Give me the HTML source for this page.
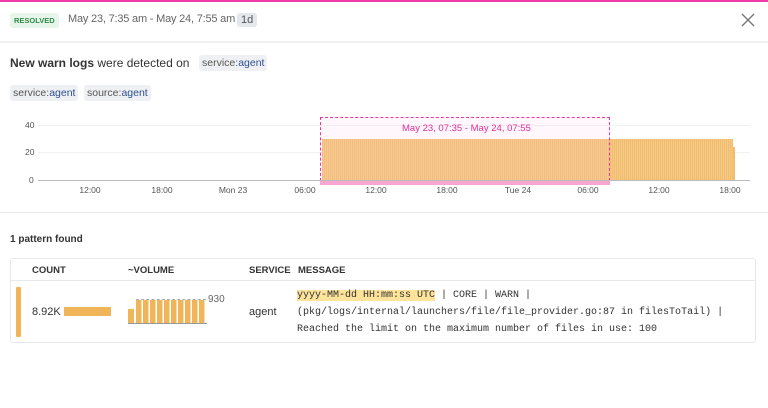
<!DOCTYPE html>
<html><head><style>
*{margin:0;padding:0;box-sizing:border-box}
body{width:768px;height:408px;background:#fff;font-family:"Liberation Sans",sans-serif;position:relative;overflow:hidden;color:#333}
.a{position:absolute;white-space:nowrap}
.tag{background:#eef0f3;border-radius:3px;padding:2px 3px;font-size:10.5px;color:#555}
.tag b{font-weight:normal;color:#2f4f8f}
.yl{font-size:8.5px;color:#555}
.xl{font-size:8.5px;color:#555;transform:translateX(-50%)}
.h{font-size:9.5px;font-weight:bold;color:#333}
.mono{font-family:"Liberation Mono",monospace;font-size:10px;color:#333;line-height:17px}
</style></head><body>
<div class="a" style="left:0;top:0;width:768px;height:2px;background:#f03ca8"></div>
<div class="a" style="left:10px;top:13px;background:#e8f5ea;color:#2e8b47;font-size:7.5px;font-weight:bold;padding:3px 4px;border-radius:3px">RESOLVED</div>
<div class="a" style="left:68px;top:13px;font-size:11px;letter-spacing:-0.2px;color:#666">May 23, 7:35 am - May 24, 7:55 am</div>
<div class="a" style="left:237px;top:13px;background:#e4e7ec;color:#555;font-size:11px;padding:1px 4px;border-radius:3px">1d</div>
<svg class="a" style="left:741px;top:13px" width="14" height="14"><path d="M1 1L13 13M13 1L1 13" stroke="#777" stroke-width="1.4"/></svg>
<div class="a" style="left:0;top:41px;width:768px;height:2px;background:#eef0f3"></div>
<div class="a" style="left:10px;top:56px;font-size:12px;color:#333"><b>New warn logs</b> were detected on</div>
<div class="a tag" style="left:199px;top:55px">service:<b>agent</b></div>
<div class="a tag" style="left:10px;top:85px">service:<b>agent</b></div>
<div class="a tag" style="left:84px;top:85px">source:<b>agent</b></div>
<div class="a yl" style="left:25px;top:120px">40</div>
<div class="a yl" style="left:25px;top:147px">20</div>
<div class="a yl" style="left:29px;top:175px">0</div>
<div class="a" style="left:38px;top:125px;width:712px;height:1px;background:#f0f1f3"></div>
<div class="a" style="left:38px;top:152px;width:712px;height:1px;background:#f0f1f3"></div>
<div class="a" style="left:322px;top:139px;width:411px;height:41px;background:repeating-linear-gradient(90deg,#f2bd6c 0,#f2bd6c 1.4px,#f7d3a0 1.4px,#f7d3a0 2px)"></div>
<div class="a" style="left:733px;top:147px;width:2px;height:33px;background:#f2bd6c"></div>
<div class="a" style="left:320px;top:117px;width:290px;height:64px;border:1px dashed #e8389f;border-bottom:none;background:rgba(255,200,230,0.15)"></div>
<div class="a" style="left:320px;top:181px;width:290px;height:4px;background:#f7a6d2"></div>
<div class="a" style="left:402px;top:123px;font-size:9.5px;color:#e0309a">May 23, 07:35 - May 24, 07:55</div>
<div class="a" style="left:38px;top:180px;width:712px;height:1px;background:#bbb"></div>
<div class="a xl" style="left:90px;top:185px">12:00</div>
<div class="a xl" style="left:162px;top:185px">18:00</div>
<div class="a xl" style="left:233px;top:185px">Mon 23</div>
<div class="a xl" style="left:305px;top:185px">06:00</div>
<div class="a xl" style="left:376px;top:185px">12:00</div>
<div class="a xl" style="left:447px;top:185px">18:00</div>
<div class="a xl" style="left:518px;top:185px">Tue 24</div>
<div class="a xl" style="left:588px;top:185px">06:00</div>
<div class="a xl" style="left:659px;top:185px">12:00</div>
<div class="a xl" style="left:730px;top:185px">18:00</div>
<div class="a" style="left:0;top:212px;width:768px;height:1px;background:#e6e8ec"></div>
<div class="a" style="left:10px;top:234px;font-size:10px;font-weight:bold;color:#333">1 pattern found</div>
<div class="a" style="left:10px;top:258px;width:746px;height:85px;border:1px solid #e6e8ec;border-radius:3px"></div>
<div class="a" style="left:10px;top:280px;width:746px;height:1px;background:#e6e8ec"></div>
<div class="a h" style="left:32px;top:265px">COUNT</div>
<div class="a h" style="left:128px;top:265px">~VOLUME</div>
<div class="a h" style="left:249px;top:265px">SERVICE</div>
<div class="a h" style="left:298px;top:265px">MESSAGE</div>
<div class="a" style="left:16px;top:287px;width:5px;height:50px;background:#f0b459;border-radius:1px"></div>
<div class="a" style="left:32px;top:306px;font-size:11px;color:#333">8.92K</div>
<div class="a" style="left:64px;top:307px;width:47px;height:9px;background:#f0b459"></div>
<div class="a" style="left:136px;top:299px;width:70px;height:1px;border-top:1px dashed #aaa"></div>
<div class="a" style="left:136px;top:300px;width:70px;height:23px;background:repeating-linear-gradient(90deg,#f0b459 0,#f0b459 5.5px,#fff 5.5px,#fff 7px)"></div>
<div class="a" style="left:128px;top:309px;width:6px;height:14px;background:#f0b459"></div>
<div class="a" style="left:128px;top:323px;width:79px;height:1px;background:#999"></div>
<div class="a" style="left:208px;top:294px;font-size:10px;color:#666">930</div>
<div class="a" style="left:249px;top:306px;font-size:11px;color:#333">agent</div>
<div class="a mono" style="left:297px;top:287px"><span style="background:#fde49a">yyyy-MM-dd HH:mm:ss UTC</span> | CORE | WARN |<br>(pkg/logs/internal/launchers/file/file_provider.go:87 in filesToTail) |<br>Reached the limit on the maximum number of files in use: 100</div>
</body></html>
